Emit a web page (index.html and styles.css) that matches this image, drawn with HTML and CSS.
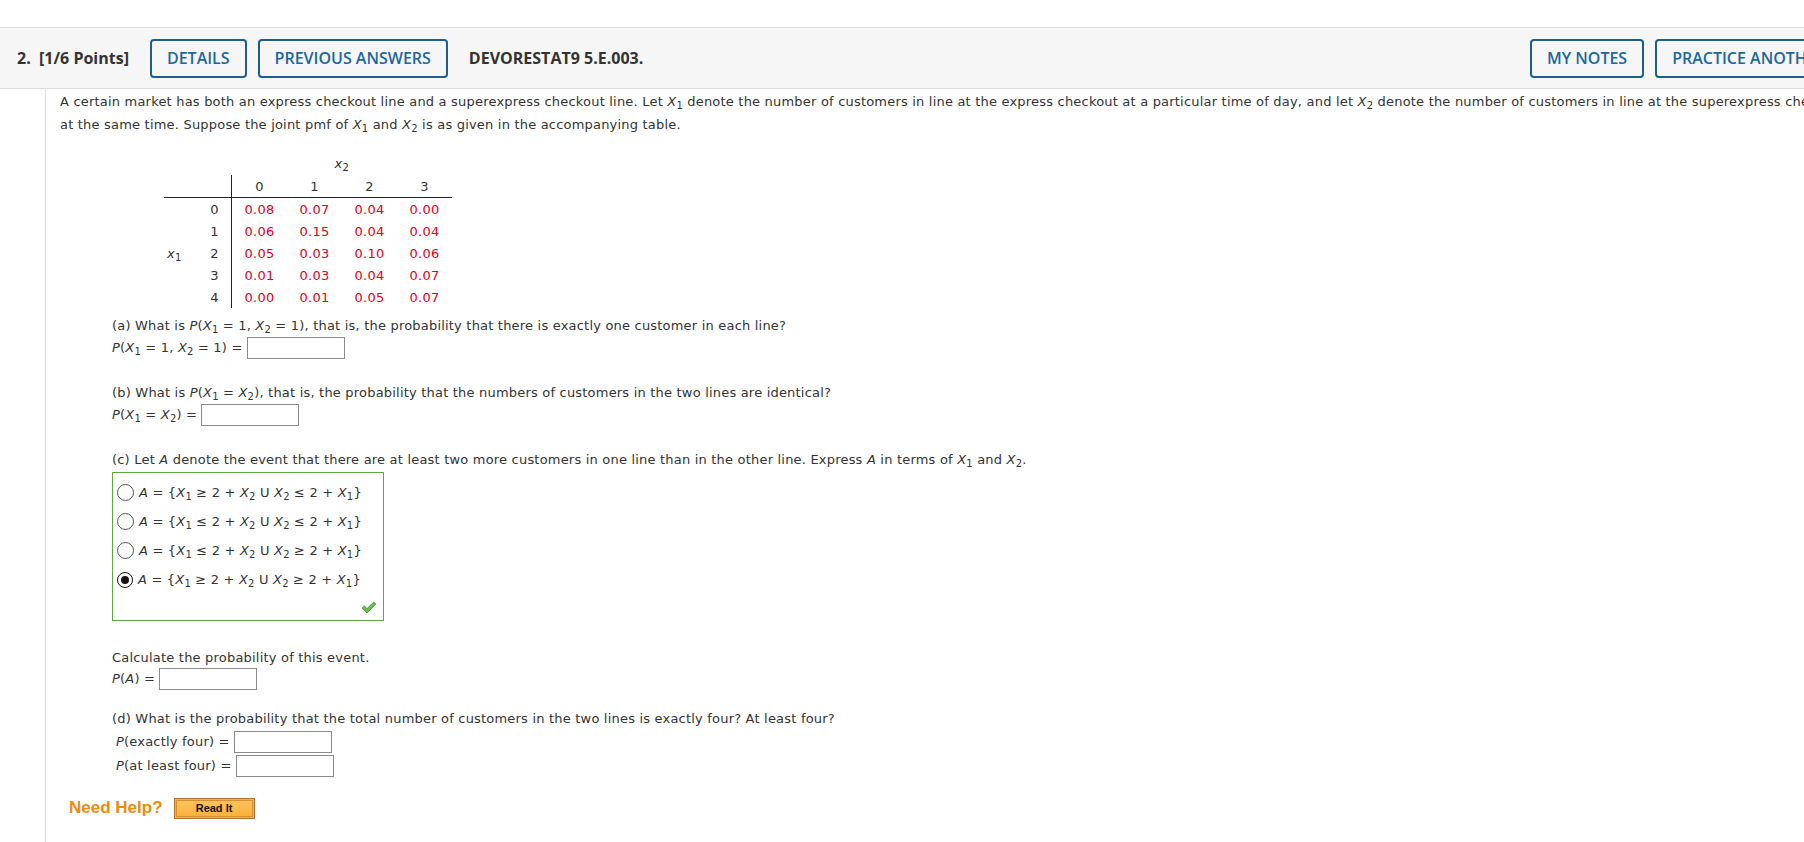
FILE: index.html
```html
<!DOCTYPE html>
<html>
<head>
<meta charset="utf-8">
<title>DEVORESTAT9 5.E.003.</title>
<link rel="stylesheet" href="styles.css">
</head>
<body>
<div class="page">
  <div class="qhead">
    <span class="qnum">2.&nbsp; [1/6 Points]</span>
    <span class="btn">DETAILS</span>
    <span class="btn">PREVIOUS ANSWERS</span>
    <span class="qtitle">DEVORESTAT9 5.E.003.</span>
    <span class="spacer"></span>
    <span class="btn">MY NOTES</span>
    <span class="btn">PRACTICE ANOTHER</span>
  </div>
  <div class="qbody">
    <p class="intro">A certain market has both an express checkout line and a superexpress checkout line. Let <i>X</i><sub>1</sub> denote the number of customers in line at the express checkout at a particular time of day, and let <i>X</i><sub>2</sub> denote the number of customers in line at the superexpress checkout at the same time. Suppose the joint pmf of <i>X</i><sub>1</sub> and <i>X</i><sub>2</sub> is as given in the accompanying table.</p>

    <table class="pmf">
      <tr class="r-x2"><td class="c-lab"></td><td class="c-rl"></td><td colspan="4" class="x2lab"><i>x</i><sub>2</sub></td></tr>
      <tr class="r-head"><td class="c-lab"></td><td class="c-rl"></td><td>0</td><td>1</td><td>2</td><td>3</td></tr>
      <tr><td class="c-lab"></td><td class="c-rl">0</td><td class="v">0.08</td><td class="v">0.07</td><td class="v">0.04</td><td class="v">0.00</td></tr>
      <tr><td class="c-lab"></td><td class="c-rl">1</td><td class="v">0.06</td><td class="v">0.15</td><td class="v">0.04</td><td class="v">0.04</td></tr>
      <tr><td class="c-lab"><i>x</i><sub>1</sub></td><td class="c-rl">2</td><td class="v">0.05</td><td class="v">0.03</td><td class="v">0.10</td><td class="v">0.06</td></tr>
      <tr><td class="c-lab"></td><td class="c-rl">3</td><td class="v">0.01</td><td class="v">0.03</td><td class="v">0.04</td><td class="v">0.07</td></tr>
      <tr><td class="c-lab"></td><td class="c-rl">4</td><td class="v">0.00</td><td class="v">0.01</td><td class="v">0.05</td><td class="v">0.07</td></tr>
    </table>

    <div class="part part-a">
      <div class="q">(a) What is <i>P</i>(<i>X</i><sub>1</sub> = 1, <i>X</i><sub>2</sub> = 1), that is, the probability that there is exactly one customer in each line?</div>
      <div class="ans"><i>P</i>(<i>X</i><sub>1</sub> = 1, <i>X</i><sub>2</sub> = 1) = <span class="box"></span></div>
    </div>

    <div class="part part-b">
      <div class="q">(b) What is <i>P</i>(<i>X</i><sub>1</sub> = <i>X</i><sub>2</sub>), that is, the probability that the numbers of customers in the two lines are identical?</div>
      <div class="ans"><i>P</i>(<i>X</i><sub>1</sub> = <i>X</i><sub>2</sub>) = <span class="box"></span></div>
    </div>

    <div class="part part-c">
      <div class="q">(c) Let <i>A</i> denote the event that there are at least two more customers in one line than in the other line. Express <i>A</i> in terms of <i>X</i><sub>1</sub> and <i>X</i><sub>2</sub>.</div>
      <div class="choices">
        <div class="opt"><span class="radio"></span><span><i>A</i> = {<i>X</i><sub>1</sub> ≥ 2 + <i>X</i><sub>2</sub> U <i>X</i><sub>2</sub> ≤ 2 + <i>X</i><sub>1</sub>}</span></div>
        <div class="opt"><span class="radio"></span><span><i>A</i> = {<i>X</i><sub>1</sub> ≤ 2 + <i>X</i><sub>2</sub> U <i>X</i><sub>2</sub> ≤ 2 + <i>X</i><sub>1</sub>}</span></div>
        <div class="opt"><span class="radio"></span><span><i>A</i> = {<i>X</i><sub>1</sub> ≤ 2 + <i>X</i><sub>2</sub> U <i>X</i><sub>2</sub> ≥ 2 + <i>X</i><sub>1</sub>}</span></div>
        <div class="opt"><span class="radio on"></span><span><i>A</i> = {<i>X</i><sub>1</sub> ≥ 2 + <i>X</i><sub>2</sub> U <i>X</i><sub>2</sub> ≥ 2 + <i>X</i><sub>1</sub>}</span></div>
        <div class="checkrow">
          <svg class="check" width="16" height="13" viewBox="0 0 16 13"><path d="M1 7.2 L3.4 5 L6 7.6 L12.8 1 L15 3.2 L6 12 Z" fill="#6dbb55" stroke="#3f8f2f" stroke-width="0.8" stroke-linejoin="round"/></svg>
        </div>
      </div>
      <div class="q calc">Calculate the probability of this event.</div>
      <div class="ans ans-pa"><i>P</i>(<i>A</i>) = <span class="box"></span></div>
    </div>

    <div class="part part-d">
      <div class="q">(d) What is the probability that the total number of customers in the two lines is exactly four? At least four?</div>
      <div class="ans ind"><i>P</i>(exactly four) = <span class="box"></span></div>
      <div class="ans ind"><i>P</i>(at least four) = <span class="box"></span></div>
    </div>

    <div class="help">
      <span class="needhelp">Need Help?</span>
      <span class="readit"><span>Read It</span></span>
    </div>
  </div>
</div>
</body>
</html>
```

FILE: styles.css
```css
html, body {
  margin: 0;
  padding: 0;
  background: #fff;
  overflow: hidden;
}
body {
  font-family: "DejaVu Sans", Verdana, sans-serif;
  font-size: 13px;
  letter-spacing: 0.2px;
  color: #333;
}
.page {
  width: 1864px;
  padding-top: 27px;
}
.qhead {
  display: flex;
  align-items: center;
  height: 60px;
  padding: 0 10px 0 17px;
  background: #f6f6f6;
  border-top: 1px solid #dcdcdc;
  border-bottom: 1px solid #dcdcdc;
  font-family: "Open Sans", "Liberation Sans", sans-serif;
  font-size: 16px;
  letter-spacing: 0;
}
.qnum {
  font-weight: 700;
  color: #333;
  margin-right: 21px;
}
.btn {
  display: inline-flex;
  align-items: center;
  height: 35px;
  padding: 0 15px;
  border: 2px solid #1a5f8f;
  border-radius: 4px;
  color: #1d67a0;
  font-weight: 600;
  margin-right: 11px;
}
.qtitle {
  font-weight: 700;
  color: #333;
  margin-left: 10px;
}
.spacer { flex: 1; }
.qbody {
  margin-left: 45px;
  border-left: 1px solid #dcdcdc;
  padding: 1px 4px 40px 14px;
}
sub {
  font-size: 10px;
  line-height: 0;
  vertical-align: -3px;
  font-style: normal;
}
.intro {
  margin: 0;
  line-height: 23px;
}
.pmf {
  border-collapse: collapse;
  margin: 15px 0 0 104px;
  color: #333;
  letter-spacing: 0.3px;
}
.pmf td {
  padding: 0;
  height: 22px;
  text-align: center;
  width: 55px;
}
.pmf td.c-lab { width: 31px; text-align: left; padding-left: 3px; }
.pmf td.c-rl { width: 33px; }
.pmf tr.r-x2 td { height: 24px; }
.pmf tr.r-head td { border-bottom: 1px solid #222; }
.pmf tr:not(.r-x2) td.c-rl { border-right: 1px solid #222; }
.pmf td.v { color: #e3001b; }
.part {
  margin-left: 52px;
}
.part-a { margin-top: 7px; }
.part-b { margin-top: 23px; }
.part-c { margin-top: 23px; }
.part-d { margin-top: 19px; }
.q {
  line-height: 22px;
}
.ans {
  height: 22px;
  line-height: 22px;
  white-space: nowrap;
}
.ans.ind {
  padding-left: 4px;
  height: 24px;
  line-height: 24px;
}
.ans-pa { height: 21px; line-height: 21px; margin-top: -1px; }
.box {
  display: inline-block;
  width: 96px;
  height: 20px;
  border: 1px solid #8a8a8a;
  background: #fff;
  margin-left: 0;
  vertical-align: middle;
  position: relative;
  top: -1px;
}
.choices {
  width: 270px;
  border: 1px solid #63a83e;
  margin-top: 1px;
  padding-top: 5px;
  padding-bottom: 6px;
}
.opt {
  display: flex;
  align-items: center;
  height: 29px;
  padding-left: 4px;
}
.radio {
  width: 15px;
  height: 15px;
  border: 1px solid #555;
  border-radius: 50%;
  background: #fff;
  margin-right: 5px;
  position: relative;
  flex: none;
}
.radio.on {
  width: 14px;
  height: 14px;
  border: 1.5px solid #111;
}
.radio.on::after {
  content: "";
  position: absolute;
  left: 3px;
  top: 3px;
  width: 8px;
  height: 8px;
  border-radius: 50%;
  background: #111;
}
.checkrow {
  display: flex;
  justify-content: flex-end;
  padding-right: 6px;
  height: 20px;
  align-items: flex-end;
}
.calc { margin-top: 26px; }
.help {
  display: flex;
  align-items: center;
  margin-top: 19px;
  margin-left: 9px;
  height: 22px;
}
.needhelp {
  font-family: "Liberation Sans", Arial, sans-serif;
  font-weight: 700;
  font-size: 17px;
  letter-spacing: 0;
  color: #ef8a0c;
  margin-right: 11px;
}
.readit {
  display: inline-block;
  width: 79px;
  height: 19px;
  border: 1px solid #b0712c;
  background: #fbb03a;
}
.readit span {
  display: flex;
  align-items: center;
  justify-content: center;
  height: 15px;
  margin: 1px;
  border: 1px solid #d98f30;
  background: linear-gradient(#fec35c, #fbb03a);
  font-family: "Liberation Sans", Arial, sans-serif;
  font-weight: 700;
  font-size: 11px;
  letter-spacing: 0;
  color: #111;
}
```
